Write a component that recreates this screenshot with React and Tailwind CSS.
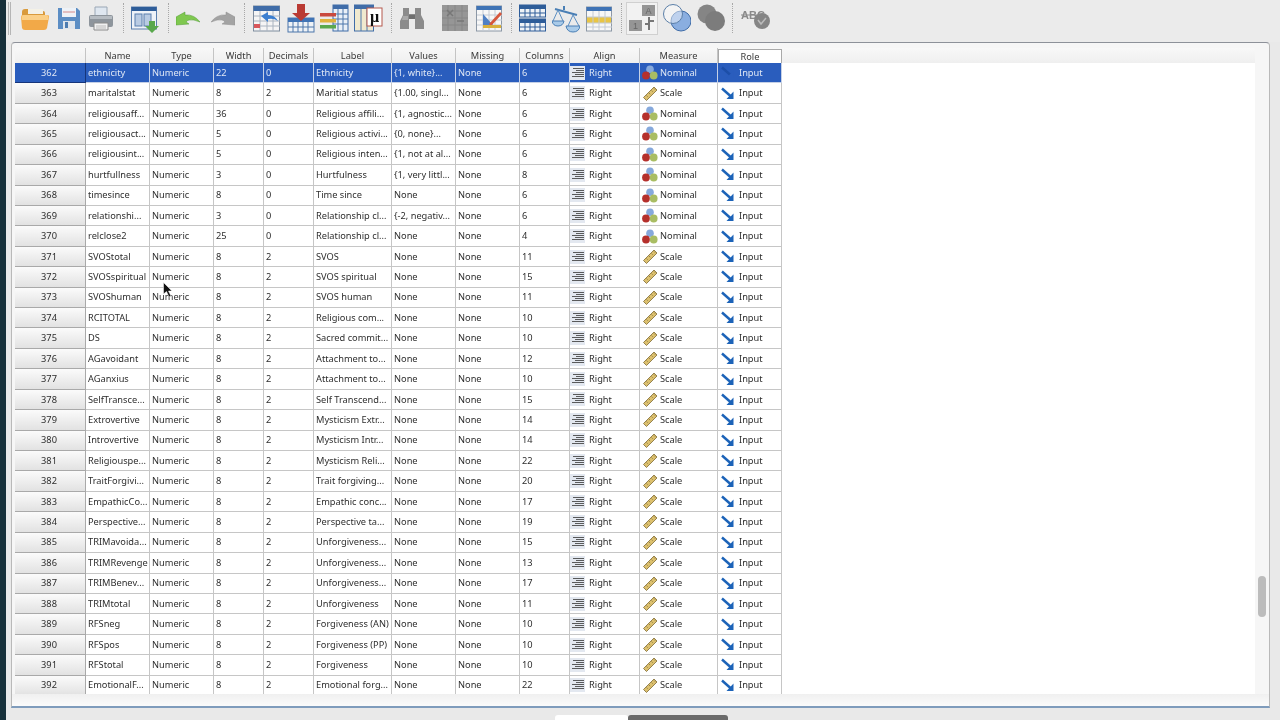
import React from "react";

const N = "Nominal";
const S = "Scale";

// id, name, width, decimals, label, values, columns, measure
const rows = [
  [362, "ethnicity", "22", "0", "Ethnicity", "{1, white}...", "6", N],
  [363, "maritalstat", "8", "2", "Maritial status", "{1.00, singl...", "6", S],
  [364, "religiousaff...", "36", "0", "Religious affili...", "{1, agnostic...", "6", N],
  [365, "religiousact...", "5", "0", "Religious activi...", "{0, none}...", "6", N],
  [366, "religiousint...", "5", "0", "Religious inten...", "{1, not at al...", "6", N],
  [367, "hurtfullness", "3", "0", "Hurtfulness", "{1, very littl...", "8", N],
  [368, "timesince", "8", "0", "Time since", "None", "6", N],
  [369, "relationshi...", "3", "0", "Relationship cl...", "{-2, negativ...", "6", N],
  [370, "relclose2", "25", "0", "Relationship cl...", "None", "4", N],
  [371, "SVOStotal", "8", "2", "SVOS", "None", "11", S],
  [372, "SVOSspiritual", "8", "2", "SVOS spiritual", "None", "15", S],
  [373, "SVOShuman", "8", "2", "SVOS human", "None", "11", S],
  [374, "RCITOTAL", "8", "2", "Religious com...", "None", "10", S],
  [375, "DS", "8", "2", "Sacred commit...", "None", "10", S],
  [376, "AGavoidant", "8", "2", "Attachment to...", "None", "12", S],
  [377, "AGanxius", "8", "2", "Attachment to...", "None", "10", S],
  [378, "SelfTransce...", "8", "2", "Self Transcend...", "None", "15", S],
  [379, "Extrovertive", "8", "2", "Mysticism Extr...", "None", "14", S],
  [380, "Introvertive", "8", "2", "Mysticism Intr...", "None", "14", S],
  [381, "Religiouspe...", "8", "2", "Mysticism Reli...", "None", "22", S],
  [382, "TraitForgivi...", "8", "2", "Trait forgiving...", "None", "20", S],
  [383, "EmpathicCo...", "8", "2", "Empathic conc...", "None", "17", S],
  [384, "Perspective...", "8", "2", "Perspective ta...", "None", "19", S],
  [385, "TRIMavoida...", "8", "2", "Unforgiveness...", "None", "15", S],
  [386, "TRIMRevenge", "8", "2", "Unforgiveness...", "None", "13", S],
  [387, "TRIMBenev...", "8", "2", "Unforgiveness...", "None", "17", S],
  [388, "TRIMtotal", "8", "2", "Unforgiveness", "None", "11", S],
  [389, "RFSneg", "8", "2", "Forgiveness (AN)", "None", "10", S],
  [390, "RFSpos", "8", "2", "Forgiveness (PP)", "None", "10", S],
  [391, "RFStotal", "8", "2", "Forgiveness", "None", "10", S],
  [392, "EmotionalF...", "8", "2", "Emotional forg...", "None", "22", S],
];

const gridCols =
  "grid grid-cols-[71px_64px_64px_50px_50px_78px_64px_64px_50px_70px_78px_64px]";

const headers = ["", "Name", "Type", "Width", "Decimals", "Label", "Values", "Missing", "Columns", "Align", "Measure"];

/* cell icons */
const AlignIcon = () => (
  <svg width="15" height="14" viewBox="0 0 15 14" className="shrink-0">
    <rect width="15" height="14" fill="#e3e8f0" />
    <path d="M3 2.500h11M6 4.500h8M2 6.500h12M5 8.500h9M2 10.500h12" stroke="#4a4a4a" strokeWidth="0.900" />
  </svg>
);

const NominalIcon = () => (
  <svg width="16" height="15" viewBox="0 0 16 15" className="shrink-0">
    <circle cx="8" cy="4.300" r="3.800" fill="#86a9dc" />
    <circle cx="4" cy="10.500" r="3.900" fill="#b5302c" />
    <circle cx="11.700" cy="10.500" r="3.900" fill="#a9bd63" />
  </svg>
);

const ScaleIcon = () => (
  <svg width="16" height="15" viewBox="0 0 16 15" className="shrink-0">
    <path d="M1.500 11.500 12 1 15 4 4.500 14.500Z" fill="#dcc06e" stroke="#7d6a35" strokeWidth="0.800" />
    <path d="M4.500 9.500l1.200 1.200M7 7l1.200 1.200M9.500 4.500l1.200 1.200M12 2.500l1.200 1.200" stroke="#7d6a35" strokeWidth="0.700" />
  </svg>
);

const RoleIcon = ({ selected }) => (
  <svg width="14" height="13" viewBox="0 0 14 13" className="shrink-0">
    <path d="M1 1.500 10 9.500" stroke={selected ? "#1d4fa8" : "#1c63b8"} strokeWidth="2.400" />
    <path d="M12.500 4.500V12H5.500Z" fill={selected ? "#2a5dbd" : "#1c63b8"} />
  </svg>
);

function Row({ row, index }) {
  const [id, name, width, decimals, label, values, columns, measure] = row;
  const selected = index === 0;
  const cell = `flex items-center overflow-hidden whitespace-nowrap border-r border-b pl-[2px] ${
    selected ? "bg-[#2a5dbd] text-[#dfe7f5] border-[#c5d0e6]" : "border-[#c6c6c6]"
  }`;
  return (
    <div className={`${gridCols} h-[20.43px] text-[9.25px] text-[#2e2e2e]`}>
      <div
        className={`flex items-center justify-center border-b border-r pr-[2px] ${
          selected
            ? "bg-[#2a5dbd] text-[#dfe7f5] border-[#16357a]"
            : "bg-gradient-to-b from-[#fbfbfb] to-[#e2e2e2] border-[#a9a9a9]"
        }`}
      >
        {id}
      </div>
      {[name, "Numeric", width, decimals, label, values, "None", columns].map((text, i) => (
        <div key={i} className={cell}>
          {text}
        </div>
      ))}
      <div className={`${cell} gap-[4px] !pl-0`}>
        <AlignIcon />
        <span>Right</span>
      </div>
      <div className={`${cell} gap-[2px] !pl-[2px]`}>
        {measure === N ? <NominalIcon /> : <ScaleIcon />}
        <span>{measure}</span>
      </div>
      <div className={`${cell} gap-[4px] !pl-[3px]`}>
        <RoleIcon selected={selected} />
        <span>Input</span>
      </div>
    </div>
  );
}

/* toolbar icons */
const Folder = () => (
  <svg width="30" height="26" viewBox="0 0 30 26">
    <path d="M2 7q0-3 3-3h7l2 2h9q2 0 2 2v3H2Z" fill="#d99a3c" />
    <path d="M8 4h15v5H8Z" fill="#f4f1e6" />
    <path d="M1 12q0-2 2-2h24q2.500 0 2 2l-2 11q-.5 2-3 2H5q-2.500 0-3-2Z" fill="#f2a948" />
    <path d="M1.500 12q0-2 2-2h23q2 0 2 2l-.5 3H2Z" fill="#fbcf86" />
  </svg>
);
const Save = () => (
  <svg width="24" height="26" viewBox="0 0 24 26">
    <path d="M1 3h19l3 3v18H1Z" fill="#5b8dc4" />
    <rect x="5" y="3" width="14" height="9" fill="#eef2f7" />
    <path d="M6 7h12" stroke="#d48a8a" strokeWidth="1" />
    <rect x="6" y="16" width="12" height="8" fill="#dfe5ec" />
    <rect x="8" y="17" width="3" height="6" fill="#4d7cb0" />
  </svg>
);
const Printer = () => (
  <svg width="26" height="28" viewBox="0 0 26 28">
    <path d="M7 3h12v9H7Z" fill="#dfe7f0" stroke="#9aa7b5" />
    <path d="M3 11h20q2 0 2 2v8q0 2-2 2H3q-2 0-2-2v-8q0-2 2-2Z" fill="#8e959c" />
    <path d="M2 12h22v3H2Z" fill="#b6bcc2" />
    <path d="M6 19h14v7H6Z" fill="#f1f1f1" stroke="#8b8b8b" />
    <path d="M8 22h10M8 24h10" stroke="#bbb" />
  </svg>
);
const Recall = () => (
  <svg width="29" height="30" viewBox="0 0 29 30">
    <rect x="0.500" y="4" width="25" height="22" fill="#eef2f8" stroke="#5a7fae" />
    <rect x="0.500" y="4" width="25" height="4" fill="#2e5d99" />
    <rect x="4" y="11" width="7" height="12" fill="#b9cbe3" stroke="#5a7fae" />
    <rect x="13" y="11" width="7" height="12" fill="#b9cbe3" stroke="#5a7fae" />
    <path d="M18 18h6v5h4l-7 7-7-7h4Z" fill="#59a84c" />
  </svg>
);
const Undo = ({ flip, color, dark }) => (
  <svg width="24" height="15" viewBox="0 0 24 15" className={flip ? "-scale-x-100" : ""}>
    <path d="M0 6 9 1v3q9-1 15 7-7-3-11-2-2 .5-3 2l3 2-13 1Z" fill={color} stroke={dark} strokeWidth="0.500" />
  </svg>
);
const GotoCase = () => (
  <svg width="28" height="28" viewBox="0 0 28 28">
    <rect x="0.500" y="2" width="26" height="25" fill="#f5f5f5" stroke="#7f8d9e" />
    <rect x="0.500" y="2" width="26" height="5" fill="#3f6ca8" />
    <path d="M7 7v20M14 7v20M20 7v20M1 12h26M1 17h26M1 22h26" stroke="#aab4c0" />
    <rect x="1" y="20" width="6" height="4" fill="#d8575c" />
    <path d="M8 12l7-4v3q7 0 10 6-4-3-10-2v3Z" fill="#3c7fd0" />
  </svg>
);
const GotoVar = () => (
  <svg width="28" height="30" viewBox="0 0 28 30">
    <rect x="1" y="15" width="26" height="14" fill="#eef2f6" stroke="#4d77ab" />
    <rect x="1" y="15" width="26" height="4" fill="#3f73b5" />
    <path d="M6 19v10M11 19v10M16 19v10M21 19v10M1 24h26" stroke="#4d77ab" />
    <path d="M10 1h8v9h5L14 18 5 10h5Z" fill="#b93a33" />
  </svg>
);
const Variables = () => (
  <svg width="29" height="29" viewBox="0 0 29 29">
    <rect x="13" y="1" width="15" height="26" fill="#eaf0f7" stroke="#3f6ca8" />
    <rect x="13" y="1" width="15" height="4" fill="#3f6ca8" />
    <path d="M18 5v22M23 5v22M13 10h15M13 15h15M13 20h15" stroke="#4d77ab" />
    <rect x="0" y="9" width="16" height="3.500" fill="#c94a3f" />
    <rect x="0" y="15" width="16" height="3.500" fill="#e0b13c" />
    <rect x="0" y="21" width="16" height="3.500" fill="#5aa84c" />
  </svg>
);
const Stats = () => (
  <svg width="29" height="30" viewBox="0 0 29 30">
    <rect x="0.500" y="2" width="19" height="26" fill="#f0e9cf" stroke="#3f6ca8" />
    <rect x="0.500" y="2" width="19" height="4" fill="#3f6ca8" />
    <path d="M7 6v22M13 6v22" stroke="#4d77ab" />
    <rect x="13" y="5" width="15" height="18" fill="#fff" stroke="#b5584c" />
    <text x="20.500" y="19" textAnchor="middle" fontSize="16" fontWeight="700" fontFamily="'Liberation Serif', serif" fill="#111">µ</text>
  </svg>
);
const Binoculars = () => (
  <svg width="24" height="26" viewBox="0 0 24 26">
    <path d="M3 3h6v6h6V3h6v7l3 6v8h-9V14h-6v10H0v-8l3-6Z" fill="#8b8b8b" />
    <path d="M9 10h6v4H9Z" fill="#6f6f6f" />
    <path d="M3 11h5v4H2Z" fill="#a9a9a9" />
  </svg>
);
const GreyGrid = () => (
  <svg width="26" height="26" viewBox="0 0 26 26">
    <rect width="26" height="26" fill="#969696" />
    <path d="M6 0v26M13 0v26M20 0v26M0 6h26M0 13h26M0 20h26" stroke="#868686" />
    <path d="M5 5l6 6M11 5l-6 6M15 16h7" stroke="#777" strokeWidth="1.500" />
  </svg>
);
const ChartEdit = () => (
  <svg width="27" height="28" viewBox="0 0 27 28">
    <rect x="0.500" y="2" width="25" height="25" fill="#f7f7f7" stroke="#8c98a6" />
    <rect x="0.500" y="2" width="25" height="4" fill="#3f73b5" />
    <path d="M7 6v21M13 6v21M19 6v21M1 11h25M1 16h25M1 21h25" stroke="#c3cad3" />
    <path d="M7 10v11h10Z" fill="#4f80c4" />
    <path d="M13 20 24 8l2 2-11 12Z" fill="#d6573c" />
    <rect x="7" y="21" width="18" height="3" fill="#d9b03c" />
  </svg>
);
const SplitFile = () => (
  <svg width="27" height="28" viewBox="0 0 27 28">
    <rect x="0.500" y="1" width="26" height="12" fill="#eef2f6" stroke="#2e5d99" />
    <rect x="0.500" y="1" width="26" height="4" fill="#2e5d99" />
    <path d="M6 5v8M11 5v8M16 5v8M21 5v8M1 9h26" stroke="#2e5d99" />
    <rect x="0.500" y="15" width="26" height="12" fill="#eef2f6" stroke="#2e5d99" />
    <rect x="0.500" y="15" width="26" height="4" fill="#2e5d99" />
    <path d="M6 19v8M11 19v8M16 19v8M21 19v8M1 23h26" stroke="#2e5d99" />
  </svg>
);
const Weight = () => (
  <svg width="28" height="30" viewBox="0 0 28 30">
    <path d="M3 6 25 12M12 3v4" stroke="#4a7fb5" strokeWidth="2" />
    <path d="M6 7 1 18M6 7l5 11M21 12l-5 11M21 12l6 11" stroke="#5c8fc2" fill="none" />
    <path d="M0 18h12q-1 5-6 5t-6-5Z" fill="#a9cbe9" stroke="#4a7fb5" />
    <path d="M14 23h14q-1 6-7 6t-7-6Z" fill="#a9cbe9" stroke="#4a7fb5" />
  </svg>
);
const SelectCases = () => (
  <svg width="26" height="27" viewBox="0 0 26 27">
    <rect x="0.500" y="2" width="25" height="24" fill="#f7f7f7" stroke="#8c98a6" />
    <rect x="0.500" y="2" width="25" height="4" fill="#3f73b5" />
    <rect x="1" y="12" width="24" height="6" fill="#e9c544" />
    <path d="M7 6v20M13 6v20M19 6v20M1 12h25M1 18h25M1 22h25" stroke="#c3cad3" />
  </svg>
);
const ValueLabels = () => (
  <div className="flex h-[33px] w-[32px] items-center justify-center border border-[#d0d0d0] bg-[#f2f2f2]">
    <svg width="28" height="28" viewBox="0 0 28 28">
      <rect x="14" y="1" width="13" height="11" fill="#959595" />
      <text x="20.500" y="10" textAnchor="middle" fontSize="9" fontFamily="'Liberation Sans', sans-serif" fill="#666">A</text>
      <rect x="1" y="16" width="13" height="11" fill="#959595" />
      <text x="7.500" y="25" textAnchor="middle" fontSize="9" fontFamily="'Liberation Sans', sans-serif" fill="#666">1</text>
      <path d="M21 13v13M21 17h5M21 20h-4" stroke="#777" strokeWidth="2" fill="none" />
    </svg>
  </div>
);
const Sets = () => (
  <svg width="28" height="28" viewBox="0 0 28 28">
    <circle cx="18" cy="17" r="10" fill="#8aaee0" stroke="#3f6ca8" />
    <circle cx="10" cy="10" r="9.500" fill="#ffffff" fillOpacity="0.45" stroke="#5b7fa8" />
  </svg>
);
const SetsGrey = () => (
  <svg width="28" height="28" viewBox="0 0 28 28">
    <circle cx="10" cy="10" r="9.500" fill="#858585" />
    <circle cx="18" cy="17" r="10" fill="#7c7c7c" />
  </svg>
);
const Spell = () => (
  <svg width="30" height="24" viewBox="0 0 30 24">
    <text x="0" y="13" fontSize="11" fontWeight="700" fontFamily="'Liberation Sans', sans-serif" fill="#8a8a8a">ABC</text>
    <path d="M0 9h20" stroke="#8a8a8a" />
    <circle cx="21" cy="15" r="8" fill="#858585" />
    <path d="m17 14 3 4 5-6" stroke="#bbb" strokeWidth="1.500" fill="none" />
  </svg>
);

const Sep = ({ className }) => (
  <div className={`h-[30px] shrink-0 border-l border-dotted border-[#a8a8a8] ${className}`} />
);

function Toolbar() {
  return (
    <div className="flex h-[42px] items-center bg-[#ebebeb] pb-[6px]">
      <div className="ml-[2px] h-[33px] w-[3px] shrink-0 border-x border-[#b5b5b5]" />
      <div className="ml-[9px] flex items-center">
        <Folder />
        <div className="ml-[7px]"><Save /></div>
        <div className="ml-[7px]"><Printer /></div>
      </div>
      <Sep className="ml-[9px]" />
      <div className="ml-[7px]"><Recall /></div>
      <Sep className="ml-[8px]" />
      <div className="ml-[7px]"><Undo color="#7fc84f" dark="#4f9a32" /></div>
      <div className="ml-[11px]"><Undo flip color="#a3a3a3" dark="#8d8d8d" /></div>
      <Sep className="ml-[9px]" />
      <div className="ml-[8px]"><GotoCase /></div>
      <div className="ml-[6px]"><GotoVar /></div>
      <div className="ml-[5px]"><Variables /></div>
      <div className="ml-[5px]"><Stats /></div>
      <Sep className="ml-[8px]" />
      <div className="ml-[8px]"><Binoculars /></div>
      <div className="ml-[18px]"><GreyGrid /></div>
      <div className="ml-[8px]"><ChartEdit /></div>
      <Sep className="ml-[8px]" />
      <div className="ml-[7px]"><SplitFile /></div>
      <div className="ml-[6px]"><Weight /></div>
      <div className="ml-[6px]"><SelectCases /></div>
      <Sep className="ml-[9px]" />
      <div className="ml-[4px]"><ValueLabels /></div>
      <div className="ml-[5px]"><Sets /></div>
      <div className="ml-[6px]"><SetsGrey /></div>
      <Sep className="ml-[7px]" />
      <div className="ml-[8px]"><Spell /></div>
    </div>
  );
}

export default function App() {
  return (
    <div className="relative flex h-[720px] w-[1280px] overflow-hidden bg-[#e9e9e9] blur-[0.4px] font-['Noto_Sans',sans-serif]">
      {/* dark desktop edge */}
      <div className="w-[6px] shrink-0 bg-[#17303a]" />
      <div className="flex min-w-0 flex-1 flex-col">
        <Toolbar />
        {/* data editor panel */}
        <div className="ml-[5px] mr-[10px] flex h-[666px] shrink-0 flex-col rounded-t-[4px] border-x border-t border-b-2 border-x-[#b9b9b9] border-t-[#8d9199] border-b-[#7f9cbc] bg-[#f6f6f6]">
          <div className="mt-[5px] flex min-h-0 flex-1">
            <div className="ml-[3px] w-[1240px] shrink-0 bg-white">
              {/* header row */}
              <div className={`${gridCols} h-[15px] bg-gradient-to-b from-[#f8f8f8] to-[#efefef] text-[9.25px] text-[#3a3a3a]`}>
                {headers.map((h, i) => (
                  <div key={i} className="flex items-center justify-center border-r border-[#c4c4c4] pb-[4px]">
                    {h}
                  </div>
                ))}
                <div className="mt-[1px] mb-[2px] flex items-center justify-center border border-[#a9a9a9] bg-white pb-[1px]">Role</div>
              </div>
              {rows.map((row, i) => (
                <Row key={row[0]} row={row} index={i} />
              ))}
            </div>
            {/* vertical scroll bar */}
            <div className="flex w-[14px] shrink-0 flex-col pl-[3px] pt-[528px]">
              <div className="h-[41px] w-[8px] rounded-full bg-[#bcbcbc]" />
            </div>
          </div>
          <div className="h-[12px] shrink-0 bg-gradient-to-b from-[#f0f0f0] to-[#fbfbfb]" />
        </div>
        {/* view tabs */}
        <div className="mt-[7px] ml-[549px] flex h-[5px]">
          <div className="w-[73px] rounded-t-[3px] bg-white" />
          <div className="w-[100px] rounded-t-[3px] bg-[#6a6a6a]" />
        </div>
      </div>
      {/* mouse pointer */}
      <svg width="10" height="16" viewBox="0 0 10 16" className="absolute left-[163px] top-[282px]">
        <path d="M0.500 0.500V12l3-2.500L6 15l2-1-2.500-5H9Z" fill="#111" stroke="#fff" strokeWidth="0.500" />
      </svg>
    </div>
  );
}
